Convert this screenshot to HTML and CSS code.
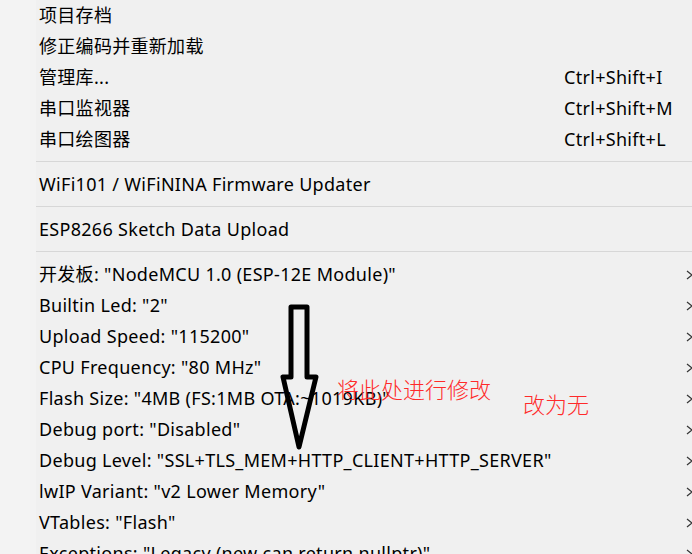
FILE: index.html
```html
<!DOCTYPE html>
<html>
<head>
<meta charset="utf-8">
<link rel="stylesheet" href="styles.css">
</head>
<body>
<div class="menu">
  <div class="group">
    <div class="item"><span class="label">项目存档</span></div>
    <div class="item"><span class="label">修正编码并重新加载</span></div>
    <div class="item"><span class="label">管理库...</span><span class="key">Ctrl+Shift+I</span></div>
    <div class="item"><span class="label">串口监视器</span><span class="key">Ctrl+Shift+M</span></div>
    <div class="item"><span class="label">串口绘图器</span><span class="key">Ctrl+Shift+L</span></div>
  </div>
  <div class="sep"></div>
  <div class="group">
    <div class="item"><span class="label">WiFi101 / WiFiNINA Firmware Updater</span></div>
  </div>
  <div class="sep"></div>
  <div class="group">
    <div class="item"><span class="label">ESP8266 Sketch Data Upload</span></div>
  </div>
  <div class="sep"></div>
  <div class="group">
    <div class="item sub"><span class="label">开发板: "NodeMCU 1.0 (ESP-12E Module)"</span><span class="key"></span><svg class="chev" viewBox="0 0 8 10"><path d="M1 1 L6 5 L1 9"/></svg></div>
    <div class="item sub"><span class="label">Builtin Led: "2"</span><span class="key"></span><svg class="chev" viewBox="0 0 8 10"><path d="M1 1 L6 5 L1 9"/></svg></div>
    <div class="item sub"><span class="label">Upload Speed: "115200"</span><span class="key"></span><svg class="chev" viewBox="0 0 8 10"><path d="M1 1 L6 5 L1 9"/></svg></div>
    <div class="item sub"><span class="label">CPU Frequency: "80 MHz"</span><span class="key"></span><svg class="chev" viewBox="0 0 8 10"><path d="M1 1 L6 5 L1 9"/></svg></div>
    <div class="item sub"><span class="label">Flash Size: "4MB (FS:1MB OTA:~1019KB)"</span><span class="key"></span><svg class="chev" viewBox="0 0 8 10"><path d="M1 1 L6 5 L1 9"/></svg></div>
    <div class="item sub"><span class="label">Debug port: "Disabled"</span><span class="key"></span><svg class="chev" viewBox="0 0 8 10"><path d="M1 1 L6 5 L1 9"/></svg></div>
    <div class="item sub"><span class="label">Debug Level: "SSL+TLS_MEM+HTTP_CLIENT+HTTP_SERVER"</span><span class="key"></span><svg class="chev" viewBox="0 0 8 10"><path d="M1 1 L6 5 L1 9"/></svg></div>
    <div class="item sub"><span class="label">lwIP Variant: "v2 Lower Memory"</span><span class="key"></span><svg class="chev" viewBox="0 0 8 10"><path d="M1 1 L6 5 L1 9"/></svg></div>
    <div class="item sub"><span class="label">VTables: "Flash"</span><span class="key"></span><svg class="chev" viewBox="0 0 8 10"><path d="M1 1 L6 5 L1 9"/></svg></div>
    <div class="item sub"><span class="label">Exceptions: "Legacy (new can return nullptr)"</span><span class="key"></span><svg class="chev" viewBox="0 0 8 10"><path d="M1 1 L6 5 L1 9"/></svg></div>
  </div>
</div>
<svg class="arrow" width="692" height="554" viewBox="0 0 692 554">
  <path d="M291 307 L307 307 L307 377 L316 377 L299 447 L283 377 L291 377 Z"/>
</svg>
<span class="note note1">将此处进行修改</span>
<span class="note note2">改为无</span>
</body>
</html>
```
FILE: styles.css
```css
html, body {
  margin: 0;
  padding: 0;
  width: 692px;
  height: 554px;
  overflow: hidden;
  background: #f0f0f0;
}
body {
  position: relative;
  font-family: "Noto Sans", "Noto Sans CJK SC", sans-serif;
  font-size: 18px;
  letter-spacing: 0.3px;
  color: #000;
}
.menu {
  width: 704px;
  display: flex;
  flex-direction: column;
  background: linear-gradient(to right, #f3f3f3 0, #f3f3f3 36px, #f0f0f0 36px);
}
.group {
  display: flex;
  flex-direction: column;
}
.item {
  height: 31px;
  display: grid;
  grid-template-columns: 525px 1fr 18px;
  align-items: center;
  padding-left: 39px;
  white-space: nowrap;
}
.label {
  line-height: 31px;
}
.key {
  line-height: 31px;
}
.chev {
  width: 8px;
  height: 10px;
  fill: none;
  stroke: #333;
  stroke-width: 1.2;
}
.sep {
  margin: 6px 0 7px 36px;
  height: 1px;
  background: #d7d7d7;
}
.arrow {
  position: absolute;
  left: 0;
  top: 0;
  pointer-events: none;
}
.arrow path {
  fill: none;
  stroke: #000;
  stroke-width: 5;
  stroke-linejoin: round;
}
.note {
  position: absolute;
  color: #ff2a2a;
  font-family: "Noto Sans CJK SC", sans-serif;
  font-size: 22px;
  font-weight: 300;
  letter-spacing: 0;
  line-height: 1;
  white-space: nowrap;
}
.note1 {
  left: 337px;
  top: 377px;
}
.note2 {
  left: 523px;
  top: 392px;
}
```
